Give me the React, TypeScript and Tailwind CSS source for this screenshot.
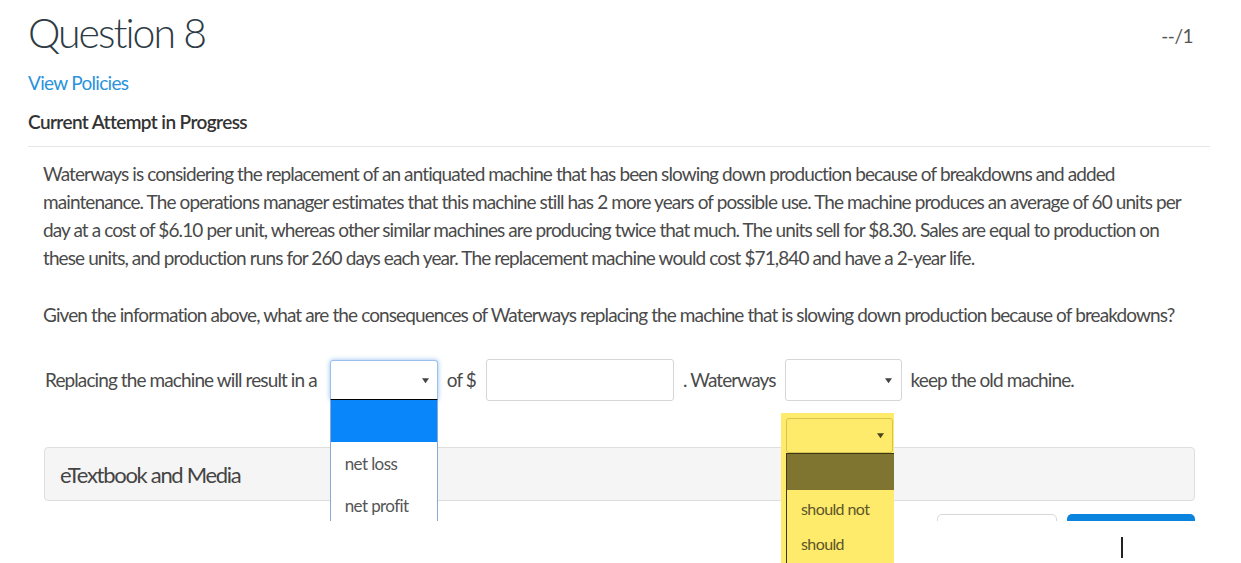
import React from "react";

function Caret({ className = "" }: { className?: string }) {
  return (
    <svg width="7" height="7" viewBox="0 0 8 8" className={className}>
      <path d="M0 1.5h8L4 7z" fill="currentColor" />
    </svg>
  );
}

const body = "text-[19px] tracking-[-0.9px] text-[#4a4a4a]";

export default function App() {
  return (
    <div className="relative h-[563px] w-[1241px] overflow-hidden bg-white font-['Lato','Noto_Sans',sans-serif]">
      <div className="relative h-[521px] overflow-hidden px-[28px]">
        <div className="flex items-start justify-between pr-[20px]">
          <h1 className="mt-[9px] text-[41px] font-light leading-[48px] tracking-[-2px] text-[#2d3b45]">Question 8</h1>
          <span className="mt-[22px] text-[19px] tracking-[-0.5px] text-[#555]">--/1</span>
        </div>
        <a className="mt-[14px] block text-[19px] leading-[24px] tracking-[-0.7px] text-[#2a93dc]">View Policies</a>
        <div className="mt-[15px] text-[19px] font-semibold leading-[24px] tracking-[-0.6px] text-[#333]">
          Current Attempt in Progress
        </div>
        <div className="mr-[3px] mt-[12px] border-t border-[#e6e6e6]" />
        <div className="pl-[15px] pr-[20px]">
          <p className={`mt-[13px] leading-[28px] ${body}`}>
            Waterways is considering the replacement of an antiquated machine that has been slowing down production
            because of breakdowns and added maintenance. The operations manager estimates that this machine still has 2
            more years of possible use. The machine produces an average of 60 units per day at a cost of $6.10 per unit,
            whereas other similar machines are producing twice that much. The units sell for $8.30. Sales are equal to
            production on these units, and production runs for 260 days each year. The replacement machine would cost
            $71,840 and have a 2-year life.
          </p>
          <p className={`mt-[29px] leading-[28px] ${body}`}>
            Given the information above, what are the consequences of Waterways replacing the machine that is slowing
            down production because of breakdowns?
          </p>
        </div>
        <div className={`mt-[30px] flex items-center pl-[17px] ${body}`}>
          <span className="mr-[13px]">Replacing the machine will result in a</span>
          <div className="relative mr-[9px]">
            <div className="flex h-[40px] w-[108px] items-center justify-end rounded-t-[3px] border border-[#9cc0ee] border-b-black pr-[8px] text-[#444] shadow-[0_0_5px_rgba(80,150,230,0.6)]">
              <Caret />
            </div>
            <div className="absolute left-0 top-[40px] z-10 w-[108px] border border-t-0 border-[#8ca6d6] bg-white">
              <div className="h-[42px] bg-[#0a86fb]" />
              <div className="flex h-[44px] items-center pl-[14px] text-[17px] tracking-[-0.6px] text-[#555]">net loss</div>
              <div className="flex h-[40px] items-center pl-[14px] text-[17px] tracking-[-0.6px] text-[#555]">net profit</div>
            </div>
          </div>
          <span className="mr-[10px]">of $</span>
          <div className="mr-[9px] h-[42px] w-[188px] rounded-[3px] border border-[#d6d6d6] bg-white" />
          <span className="mr-[9px]">. Waterways</span>
          <div className="mr-[9px] flex h-[42px] w-[117px] items-center justify-end rounded-[3px] border border-[#d6d6d6] pr-[9px] text-[#444]">
            <Caret />
          </div>
          <span>keep the old machine.</span>
        </div>
        <div className="ml-[16px] mr-[18px] mt-[46px] flex h-[54px] items-center rounded-[4px] border border-[#dedede] bg-[#f5f5f5] pl-[15px] text-[22px] tracking-[-1.3px] text-[#444]">
          eTextbook and Media
        </div>
        <div className="mr-[18px] mt-[13px] flex justify-end gap-[10px]">
          <div className="h-[30px] w-[120px] rounded-[5px] border border-[#d8d8d8] bg-white" />
          <div className="h-[30px] w-[128px] rounded-[5px] bg-[#0a84df]" />
        </div>
      </div>

      <div className="absolute left-[781px] top-[413px] h-[150px] w-[113px] bg-[#feea6b] pl-[5px] pt-[5px]">
        <div className="flex h-[35px] w-[107px] items-center justify-end rounded-[3px] border border-[#d6c450] pr-[8px] text-[#4a4420]">
          <Caret />
        </div>
        <div className="h-[200px] w-[108px] border-l border-t border-[#3a3618]">
          <div className="h-[36px] bg-[#7f7430]" />
          <div className="flex h-[38px] items-center pl-[14px] text-[16px] tracking-[-0.6px] text-[#5c5628]">should not</div>
          <div className="flex h-[32px] items-center pl-[14px] text-[16px] tracking-[-0.6px] text-[#5c5628]">should</div>
        </div>
      </div>
      <div className="absolute left-[1121px] top-[537px] h-[21px] w-[2px] bg-[#222]" />
    </div>
  );
}
